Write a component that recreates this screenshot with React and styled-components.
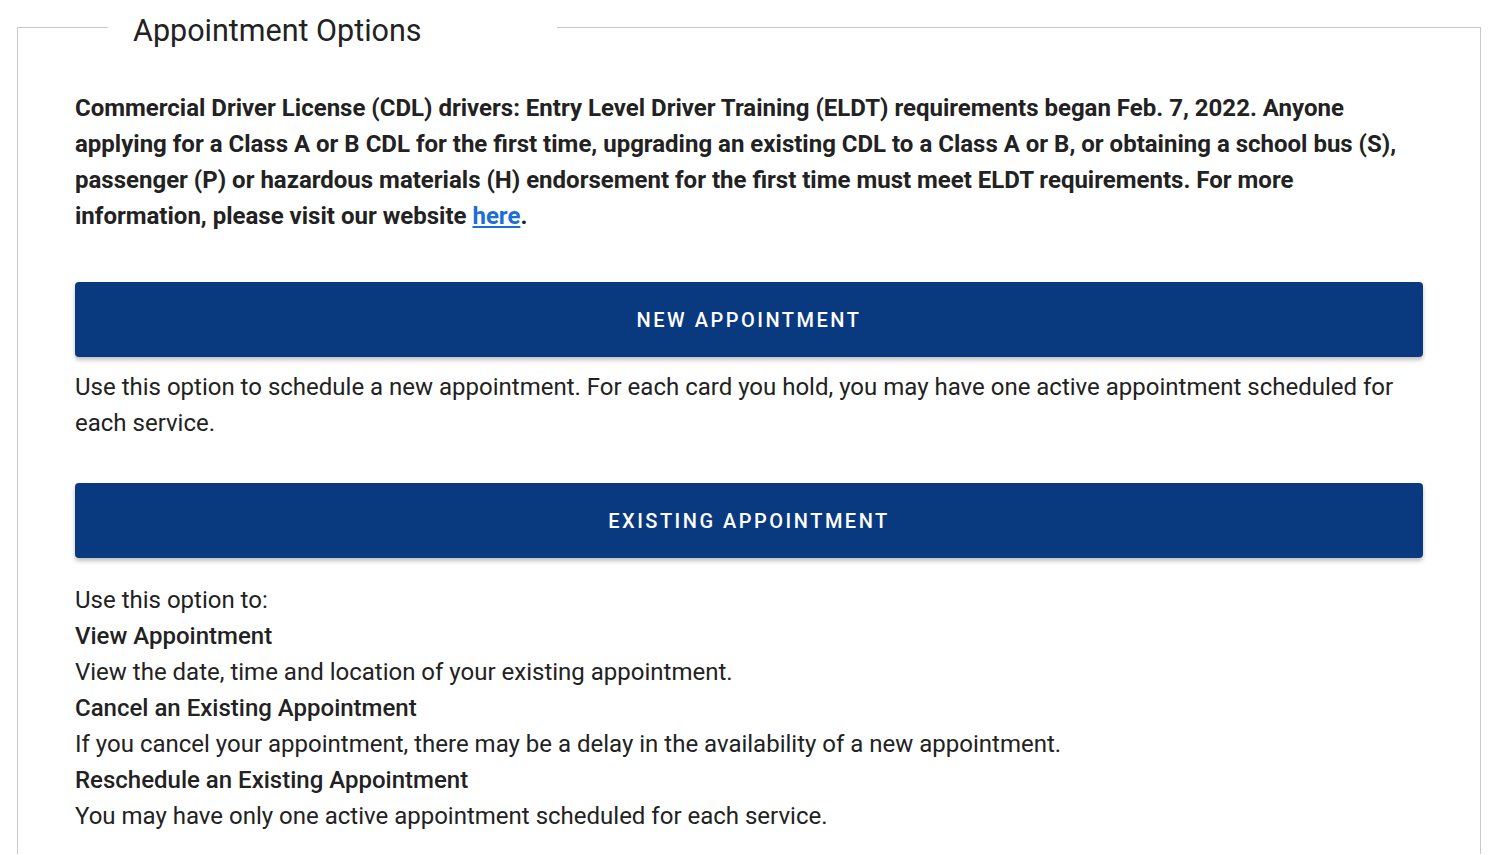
import React from "react"
import styled, { createGlobalStyle } from "styled-components"

const GlobalStyle = createGlobalStyle`
  body {
    margin: 0;
    background: #fff;
    font-family: Roboto, "Liberation Sans", Arial, sans-serif;
    color: #212121;
  }
`

const Page = styled.div`
  padding: 7px 11px 0 17px;
`

const Fieldset = styled.fieldset`
  margin: 0;
  border: 1px solid #c8c8c8;
  border-bottom: none;
  padding: 0 57px 20px 57px;
  min-height: 820px;
`

const Legend = styled.legend`
  margin-left: 33px;
  padding: 7px 25px 0;
  width: 449px;
  box-sizing: border-box;
  font-size: 30.5px;
  font-weight: 400;
  line-height: 34px;
  color: #222;
`

const Notice = styled.p`
  margin: 42px 0 48px;
  font-size: 24px;
  line-height: 36px;
  font-weight: 700;
  color: #222;
`

const Link = styled.a`
  color: #1b6fd6;
  text-decoration: underline;
`

const OptionButton = styled.button`
  display: block;
  width: 100%;
  height: 75px;
  border: none;
  border-radius: 4px;
  background: #093a7f;
  color: #fff;
  font-family: Roboto, "Liberation Sans", Arial, sans-serif;
  font-size: 20px;
  font-weight: 500;
  letter-spacing: 2.5px;
  text-transform: uppercase;
  cursor: pointer;
  box-shadow: 0 3px 4px rgba(0, 0, 0, 0.25);
`

const Text = styled.p`
  margin: ${(props) => props.margin || "0"};
  font-size: 24px;
  line-height: 36px;
  font-weight: ${(props) => (props.bold ? 500 : 400)};
  color: #222;
`

export default function App() {
  return (
    <Page>
      <GlobalStyle />
      <Fieldset>
        <Legend>Appointment Options</Legend>
        <Notice>
          Commercial Driver License (CDL) drivers: Entry Level Driver Training (ELDT) requirements began Feb. 7, 2022. Anyone
          applying for a Class A or B CDL for the first time, upgrading an existing CDL to a Class A or B, or obtaining a school bus (S),
          passenger (P) or hazardous materials (H) endorsement for the first time must meet ELDT requirements. For more
          information, please visit our website <Link href="#">here</Link>.
        </Notice>
        <OptionButton>New Appointment</OptionButton>
        <Text margin="12px 0 42px">
          Use this option to schedule a new appointment. For each card you hold, you may have one active appointment scheduled for
          each service.
        </Text>
        <OptionButton>Existing Appointment</OptionButton>
        <Text margin="24px 0 0">Use this option to:</Text>
        <Text bold>View Appointment</Text>
        <Text>View the date, time and location of your existing appointment.</Text>
        <Text bold>Cancel an Existing Appointment</Text>
        <Text>If you cancel your appointment, there may be a delay in the availability of a new appointment.</Text>
        <Text bold>Reschedule an Existing Appointment</Text>
        <Text>You may have only one active appointment scheduled for each service.</Text>
      </Fieldset>
    </Page>
  )
}
